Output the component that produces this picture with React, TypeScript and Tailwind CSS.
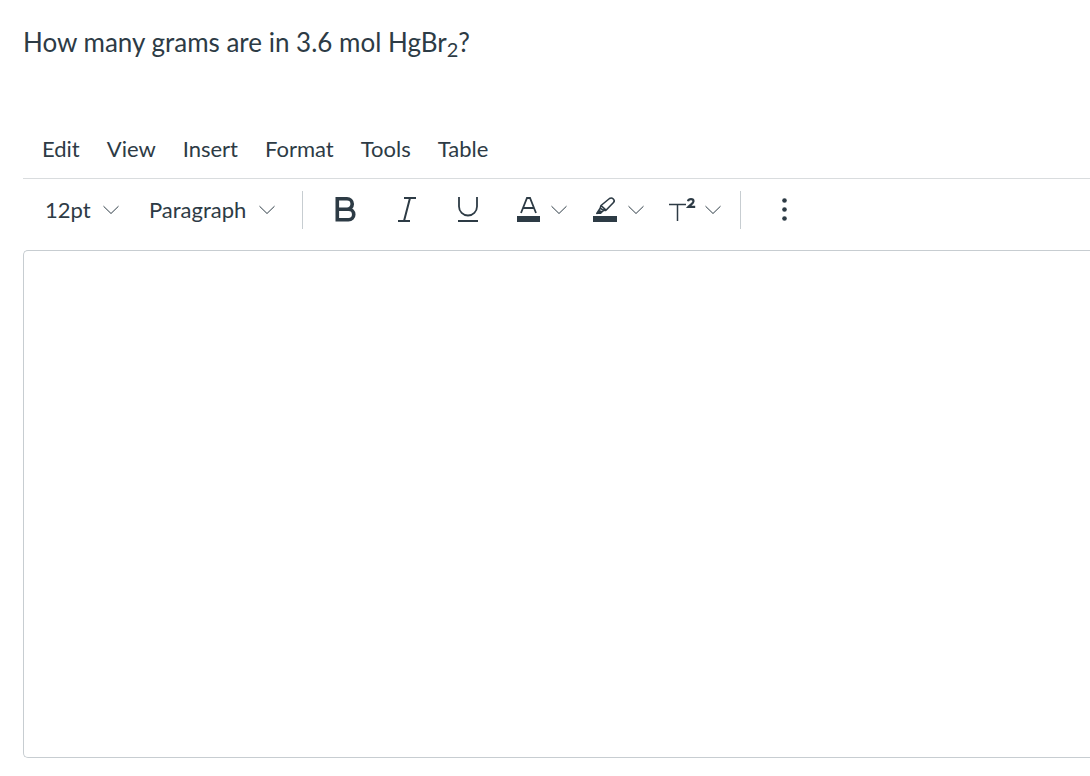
import type { ReactNode } from "react";

const menus = ["Edit", "View", "Insert", "Format", "Tools", "Table"];

function Chevron() {
  return (
    <svg
      className="pointer-events-none h-4 w-4 shrink-0"
      viewBox="0 0 16 16"
      fill="none"
      stroke="currentColor"
      strokeWidth="1"
      aria-hidden="true"
    >
      <path d="M0.5 4.2 8 11.5 15.5 4.2" />
    </svg>
  );
}

function Icon({ children }: { children: ReactNode }) {
  return (
    <svg
      className="h-7 w-7 shrink-0"
      viewBox="0 0 28 28"
      fill="none"
      stroke="currentColor"
      strokeWidth="2"
      aria-hidden="true"
    >
      {children}
    </svg>
  );
}

interface ToolButtonProps {
  label: string;
  menu?: boolean;
  children: ReactNode;
}

function ToolButton({ label, menu, children }: ToolButtonProps) {
  return (
    <button
      type="button"
      aria-label={label}
      aria-haspopup={menu ? "menu" : undefined}
      className="flex items-center gap-[9px]"
    >
      <Icon>{children}</Icon>
      {menu && <Chevron />}
    </button>
  );
}

interface ToolSelectProps {
  label: string;
  value: string;
}

function ToolSelect({ label, value }: ToolSelectProps) {
  return (
    <div className="flex items-center gap-3">
      <select aria-label={label} className="appearance-none bg-transparent text-[22px] leading-8">
        <option>{value}</option>
      </select>
      <Chevron />
    </div>
  );
}

function Divider() {
  return <div className="h-[38px] w-px bg-[#c7cdd1]" />;
}

export default function App() {
  return (
    <main className="flex min-h-screen flex-col bg-white pt-6 pb-[18px] pl-[23px] font-['Lato',sans-serif] text-[#2d3b45]">
      <p className="text-[26px] leading-9">
        How many grams are in 3.6 mol HgBr<sub className="text-[20px]">2</sub>?
      </p>

      <div className="mt-[60px] flex flex-1 flex-col">
        <nav className="flex gap-[27px] border-b border-[#d9dcde] py-[13px] pl-[19px]">
          {menus.map((menu) => (
            <button key={menu} type="button" className="text-[22px] leading-8">
              {menu}
            </button>
          ))}
        </nav>

        <div className="flex items-center pt-3 pb-[21px] pl-[22px]">
          <div className="flex gap-[30px] pr-[27px]">
            <ToolSelect label="Font size" value="12pt" />
            <ToolSelect label="Block format" value="Paragraph" />
          </div>
          <Divider />
          <div className="flex gap-[33px] pl-[29px]">
            <ToolButton label="Bold">
              <path
                d="M5.300 2.800v21H16.500a5.200 5.200 0 0 0 0-10.500H5.300h9.700a5 5 0 0 0 0-10.500Z"
                strokeWidth="3.600"
              />
            </ToolButton>
            <ToolButton label="Italic">
              <path d="M11 2h12M5 25h12M17 2 11 25" />
            </ToolButton>
            <ToolButton label="Underline">
              <path d="M5 1v9.500a9 9 0 0 0 18 0V1M4 25h20" strokeWidth="1.800" />
            </ToolButton>
          </div>
          <div className="flex gap-6 px-8 pr-[19px]">
            <ToolButton label="Text color" menu>
              <path d="M7 17 13 2h3l6 15M9 12h11" strokeWidth="1.800" />
              <path d="M3 20h23v6H3Z" fill="currentColor" stroke="none" />
            </ToolButton>
            <ToolButton label="Background color" menu>
              <path
                d="M10 9.500 18.500 2.500Q20.500 1.200 22.300 3T22.500 6.500L15 14.200Q12.500 15 9.200 12.200ZM10 9.500 15 14.200M9.200 12.200 5.800 17.400 12.500 15"
                strokeWidth="1.600"
                strokeLinejoin="round"
              />
              <path d="M8.500 14 5.500 18H10L12 15.500Z" fill="currentColor" stroke="none" />
              <path d="M2 20h24v6H2Z" fill="currentColor" stroke="none" />
            </ToolButton>
            <ToolButton label="Superscript" menu>
              <path d="M1 8.500h17M9.500 8.500V25" strokeWidth="1.500" />
              <path d="M20 5.200q.5-2 3-2 2.500 0 2.500 2c0 2-2.500 3-5 5.600h6.700" strokeWidth="2.200" />
            </ToolButton>
          </div>
          <Divider />
          <div className="pl-[29px]">
            <ToolButton label="More">
              <g fill="currentColor" stroke="none">
                <circle cx="14.500" cy="4.500" r="2.300" />
                <circle cx="14.500" cy="13.500" r="2.300" />
                <circle cx="14.500" cy="22.500" r="2.300" />
              </g>
            </ToolButton>
          </div>
        </div>

        <textarea
          aria-label="Answer"
          className="w-full flex-1 resize-none rounded-l-[5px] border border-r-0 border-[#c7cdd1] p-4 text-[22px] outline-none"
        />
      </div>
    </main>
  );
}
